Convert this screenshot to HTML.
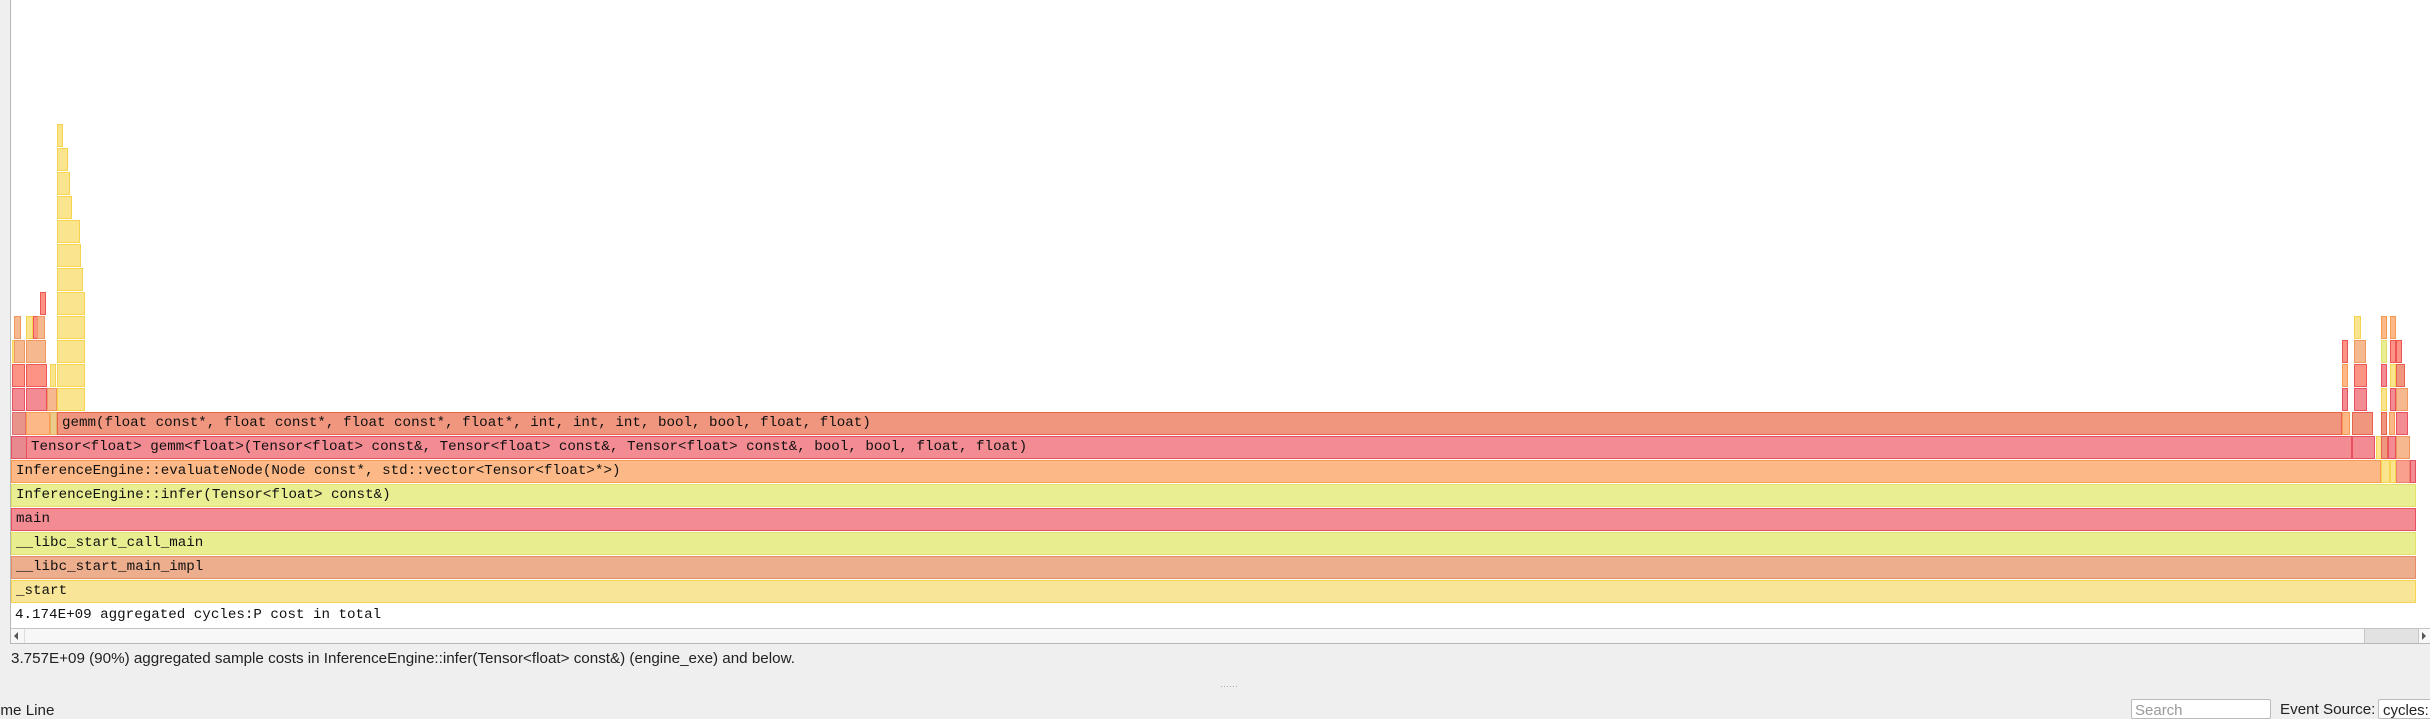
<!DOCTYPE html>
<html><head><meta charset="utf-8"><style>
html,body{margin:0;padding:0;width:2430px;height:714px;overflow:hidden;background:#efefef;font-family:"Liberation Sans",sans-serif;}
#g{position:absolute;left:11px;top:0;width:2419px;height:628px;background:#fff;}
.lb{position:absolute;left:10px;top:0;width:1px;height:644px;background:#b8b8b8;}
.r{position:absolute;box-sizing:border-box;height:23px;border:1px solid;font-family:"Liberation Mono",monospace;font-size:14.2px;line-height:21px;color:#111;white-space:nowrap;overflow:hidden;padding-left:4px;}
.y{background:#fbe48e;border-color:#f6d44f}
.s{background:#f0967f;border-color:#e8604e}
.p{background:#f38b93;border-color:#e85060}
.o{background:#fcb886;border-color:#f89a50}
.l{background:#eaee93;border-color:#e3e06a}
.t{background:#edae8e;border-color:#e58b6a}
.rd{background:#fd9385;border-color:#ee5555}
.ob{background:#f6b88e;border-color:#ee9860}
.ui{font-size:15.2px;color:#222;white-space:nowrap}
</style></head><body>
<div id="g"></div>
<div class="lb"></div>

<div class="r y" style="left:57px;top:124px;width:4px"></div>
<div class="r y" style="left:57px;top:148px;width:11px"></div>
<div class="r y" style="left:57px;top:172px;width:13px"></div>
<div class="r y" style="left:57px;top:196px;width:15px"></div>
<div class="r y" style="left:57px;top:220px;width:23px"></div>
<div class="r y" style="left:57px;top:244px;width:24px"></div>
<div class="r y" style="left:57px;top:268px;width:26px"></div>
<div class="r y" style="left:57px;top:292px;width:28px"></div>
<div class="r y" style="left:57px;top:316px;width:28px"></div>
<div class="r y" style="left:57px;top:340px;width:28px"></div>
<div class="r y" style="left:57px;top:364px;width:28px"></div>
<div class="r y" style="left:57px;top:388px;width:28px"></div>
<div class="r rd" style="left:40px;top:292px;width:2px"></div>
<div class="r ob" style="left:14px;top:316px;width:7px"></div>
<div class="r y" style="left:26px;top:316px;width:7px"></div>
<div class="r rd" style="left:33px;top:316px;width:4px"></div>
<div class="r ob" style="left:37px;top:316px;width:8px"></div>
<div class="r y" style="left:12px;top:340px;width:2px"></div>
<div class="r ob" style="left:14px;top:340px;width:11px"></div>
<div class="r ob" style="left:26px;top:340px;width:20px"></div>
<div class="r rd" style="left:12px;top:364px;width:13px"></div>
<div class="r rd" style="left:26px;top:364px;width:21px"></div>
<div class="r y" style="left:50px;top:364px;width:3px"></div>
<div class="r p" style="left:12px;top:388px;width:13px"></div>
<div class="r p" style="left:26px;top:388px;width:21px"></div>
<div class="r ob" style="left:47px;top:388px;width:10px"></div>
<div class="r" style="left:12px;top:412px;width:14px;background:#e8948a;border-color:#e07070"></div>
<div class="r o" style="left:26px;top:412px;width:24px"></div>
<div class="r" style="left:50px;top:412px;width:7px;background:#eccb8a;border-color:#e8b060"></div>
<div class="r p" style="left:11px;top:436px;width:16px;background:#e8888f"></div>

<div class="r y" style="left:2354px;top:316px;width:7px"></div>
<div class="r o" style="left:2381px;top:316px;width:3px"></div>
<div class="r o" style="left:2390px;top:316px;width:3px"></div>
<div class="r rd" style="left:2342px;top:340px;width:4px"></div>
<div class="r ob" style="left:2354px;top:340px;width:12px"></div>
<div class="r l" style="left:2381px;top:340px;width:3px"></div>
<div class="r rd" style="left:2390px;top:340px;width:4px"></div>
<div class="r rd" style="left:2396px;top:340px;width:5px"></div>
<div class="r o" style="left:2342px;top:364px;width:4px"></div>
<div class="r rd" style="left:2354px;top:364px;width:13px"></div>
<div class="r p" style="left:2381px;top:364px;width:4px"></div>
<div class="r y" style="left:2390px;top:364px;width:4px"></div>
<div class="r s" style="left:2396px;top:364px;width:9px"></div>
<div class="r p" style="left:2342px;top:388px;width:4px"></div>
<div class="r p" style="left:2354px;top:388px;width:13px"></div>
<div class="r y" style="left:2381px;top:388px;width:5px"></div>
<div class="r p" style="left:2390px;top:388px;width:4px"></div>
<div class="r ob" style="left:2396px;top:388px;width:12px"></div>

<div class="r s" style="left:57px;top:412px;width:2285px">gemm(float const*, float const*, float const*, float*, int, int, int, bool, bool, float, float)</div>
<div class="r o" style="left:2342px;top:412px;width:8px"></div>
<div class="r s" style="left:2352px;top:412px;width:21px"></div>
<div class="r s" style="left:2381px;top:412px;width:6px"></div>
<div class="r o" style="left:2389px;top:412px;width:3px"></div>
<div class="r p" style="left:2396px;top:412px;width:12px"></div>

<div class="r p" style="left:26px;top:436px;width:2326px">Tensor&lt;float&gt; gemm&lt;float&gt;(Tensor&lt;float&gt; const&amp;, Tensor&lt;float&gt; const&amp;, Tensor&lt;float&gt; const&amp;, bool, bool, float, float)</div>
<div class="r p" style="left:2352px;top:436px;width:23px"></div>
<div class="r y" style="left:2376px;top:436px;width:3px"></div>
<div class="r s" style="left:2381px;top:436px;width:7px"></div>
<div class="r p" style="left:2388px;top:436px;width:8px"></div>
<div class="r ob" style="left:2396px;top:436px;width:14px"></div>

<div class="r o" style="left:11px;top:460px;width:2370px">InferenceEngine::evaluateNode(Node const*, std::vector&lt;Tensor&lt;float&gt;*&gt;)</div>
<div class="r y" style="left:2381px;top:460px;width:9px"></div>
<div class="r y" style="left:2390px;top:460px;width:6px"></div>
<div class="r" style="left:2396px;top:460px;width:14px;background:#f9a08e;border-color:#f08070"></div>
<div class="r p" style="left:2410px;top:460px;width:3px"></div>

<div class="r l" style="left:11px;top:484px;width:2405px">InferenceEngine::infer(Tensor&lt;float&gt; const&amp;)</div>
<div class="r p" style="left:11px;top:508px;width:2405px">main</div>
<div class="r l" style="left:11px;top:532px;width:2405px;background:#e8ee90">__libc_start_call_main</div>
<div class="r t" style="left:11px;top:556px;width:2405px">__libc_start_main_impl</div>
<div class="r y" style="left:11px;top:580px;width:2405px;background:#f8e597">_start</div>

<div style="position:absolute;left:15px;top:603px;font-family:'Liberation Mono',monospace;font-size:14.2px;line-height:24px;color:#111">4.174E+09 aggregated cycles:P cost in total</div>

<div style="position:absolute;left:11px;top:628px;width:2419px;height:16px;box-sizing:border-box;border-top:1px solid #c4c4c4;border-bottom:1px solid #b8b8b8;background:#f7f7f7"></div>
<div style="position:absolute;left:14px;top:632px;width:0;height:0;border-top:4px solid transparent;border-bottom:4px solid transparent;border-right:4px solid #555"></div>
<div style="position:absolute;left:24px;top:629px;width:1px;height:14px;background:#ddd"></div>
<div style="position:absolute;left:2364px;top:629px;width:53px;height:14px;background:#e2e2e2;border-left:1px solid #c8c8c8;border-right:1px solid #c8c8c8"></div>
<div style="position:absolute;left:2422px;top:632px;width:0;height:0;border-top:4px solid transparent;border-bottom:4px solid transparent;border-left:4px solid #555"></div>

<div class="ui" style="position:absolute;left:11px;top:650px">3.757E+09 (90%) aggregated sample costs in InferenceEngine::infer(Tensor&lt;float&gt; const&amp;) (engine_exe) and below.</div>
<div style="position:absolute;left:1221px;top:686px;width:17px;height:1px;background:repeating-linear-gradient(90deg,#aaa 0 1px,transparent 1px 3px)"></div>
<div class="ui" style="position:absolute;left:-3px;top:702px">ime Line</div>

<div style="position:absolute;left:2131px;top:699px;width:140px;height:20px;background:#fff;border:1px solid #bbb;border-radius:2px;box-sizing:border-box;font-size:15px;color:#999;padding:2px 0 0 3px">Search</div>
<div class="ui" style="position:absolute;left:2280px;top:701px">Event Source:</div>
<div style="position:absolute;left:2378px;top:699px;width:60px;height:20px;background:#fff;border:1px solid #bbb;border-radius:2px;box-sizing:border-box;font-size:15px;color:#222;padding:2px 0 0 4px;white-space:nowrap;overflow:hidden">cycles:P</div>
</body></html>
